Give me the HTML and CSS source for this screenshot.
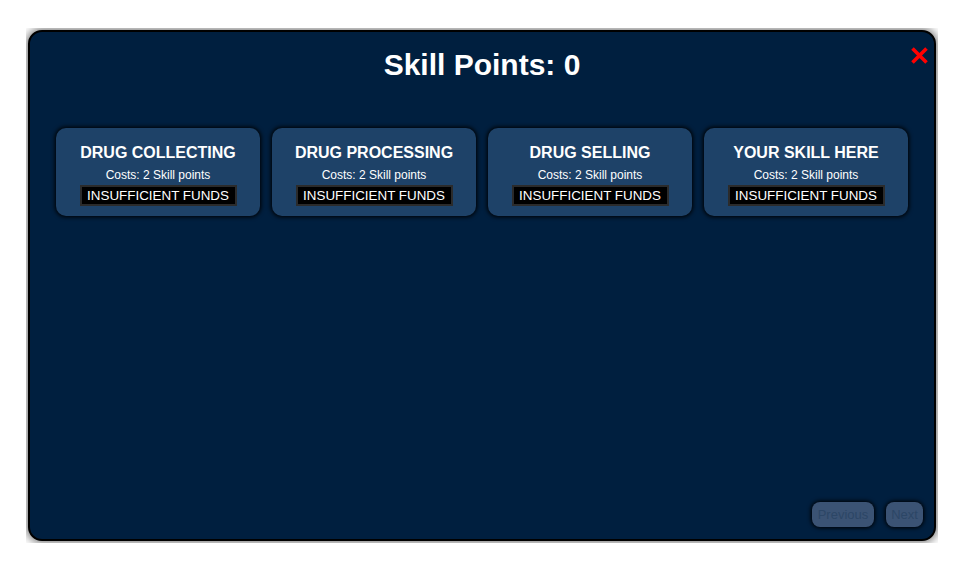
FILE: index.html
```
<!DOCTYPE html>
<html>
<head>
<meta charset="utf-8">
<link rel="stylesheet" href="styles.css">
</head>
<body>
<div class="frame">
  <div class="panel">
    <h1 class="title">Skill Points: 0</h1>
    <button class="close" aria-label="Close">
      <svg width="19" height="19" viewBox="0 0 19 19"><path d="M2.5 2.5 L16.5 16.5 M16.5 2.5 L2.5 16.5" stroke="#ff0000" stroke-width="3.6" stroke-linecap="butt"/></svg>
    </button>
    <div class="cards">
      <div class="card">
        <div class="card-title">DRUG COLLECTING</div>
        <div class="card-cost">Costs: 2 Skill points</div>
        <div class="card-btn">INSUFFICIENT FUNDS</div>
      </div>
      <div class="card">
        <div class="card-title">DRUG PROCESSING</div>
        <div class="card-cost">Costs: 2 Skill points</div>
        <div class="card-btn">INSUFFICIENT FUNDS</div>
      </div>
      <div class="card">
        <div class="card-title">DRUG SELLING</div>
        <div class="card-cost">Costs: 2 Skill points</div>
        <div class="card-btn">INSUFFICIENT FUNDS</div>
      </div>
      <div class="card">
        <div class="card-title">YOUR SKILL HERE</div>
        <div class="card-cost">Costs: 2 Skill points</div>
        <div class="card-btn">INSUFFICIENT FUNDS</div>
      </div>
    </div>
    <div class="pager">
      <button class="page-btn prev">Previous</button>
      <button class="page-btn next">Next</button>
    </div>
  </div>
</div>
</body>
</html>
```
FILE: styles.css
```
* { box-sizing: border-box; }
html, body { margin: 0; background: #ffffff; }
body {
  padding: 28px 27px 28px 26px;
  font-family: "Liberation Sans", Arial, sans-serif;
}
.frame {
  width: 912px;
  height: 515px;
  padding: 2px;
  overflow: hidden;
  background: #ffffff;
}
.panel {
  position: relative;
  width: 908px;
  height: 511px;
  background: #001f3f;
  border: 2px solid #000000;
  border-radius: 14px;
  box-shadow: 0 0 8px 2px #7a7a7a;
  display: flex;
  flex-direction: column;
  padding: 16px 11px 12px 26px;
}
.title {
  margin: 0;
  color: #ffffff;
  font-size: 30px;
  font-weight: bold;
  line-height: 34px;
  text-align: center;
  padding-right: 15px;
}
.close {
  position: absolute;
  top: 14px;
  right: 5px;
  width: 19px;
  height: 19px;
  padding: 0;
  border: 0;
  background: transparent;
  display: block;
}
.close svg { display: block; }
.cards {
  margin-top: 46px;
  display: flex;
  gap: 12px;
}
.card {
  width: 204px;
  height: 88px;
  background: #1e4268;
  border-radius: 10px;
  box-shadow: 0 0 4px 1px #000000;
  display: flex;
  flex-direction: column;
  align-items: center;
  padding-top: 16px;
  color: #ffffff;
}
.card-title {
  font-size: 16px;
  font-weight: bold;
  line-height: 18px;
}
.card-cost {
  margin-top: 6px;
  font-size: 12px;
  line-height: 14px;
}
.card-btn {
  margin-top: 3px;
  width: 157px;
  height: 21px;
  background: #000000;
  border: 2px solid #2b2b2b;
  font-size: 13.4px;
  line-height: 17px;
  text-align: center;
  color: #ffffff;
}
.pager {
  margin-top: auto;
  display: flex;
  justify-content: flex-end;
  gap: 12px;
}
.page-btn {
  height: 25px;
  padding: 0 4px;
  border: 0;
  border-radius: 8px;
  background: #3b5374;
  color: #2c4666;
  font-family: "Liberation Sans", Arial, sans-serif;
  font-size: 13px;
  font-weight: normal;
  box-shadow: 0 0 4px 1px #000000;
}
.prev { width: 62px; }
.next { width: 37px; }
```
